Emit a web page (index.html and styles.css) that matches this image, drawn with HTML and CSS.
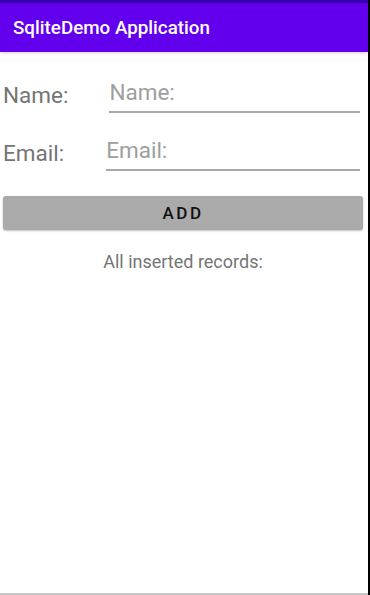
FILE: index.html
```html
<!DOCTYPE html>
<html>
<head>
<meta charset="utf-8">
<link rel="stylesheet" href="styles.css">
</head>
<body>
<div class="screen">
  <div class="status"></div>
  <header class="appbar">SqliteDemo Application</header>
  <main class="content">
    <div class="row row-name">
      <span class="label">Name:</span>
      <div class="field field-name"><span class="hint">Name:</span></div>
    </div>
    <div class="row row-email">
      <span class="label">Email:</span>
      <div class="field field-email"><span class="hint">Email:</span></div>
    </div>
    <button class="add">ADD</button>
    <p class="records">All inserted records:</p>
  </main>
</div>
</body>
</html>
```
FILE: styles.css
```css
html, body {
  margin: 0;
  padding: 0;
  background: #000;
}
.screen {
  width: 368px;
  height: 593px;
  background: #fff;
  border-bottom: 2px solid #c8c8c8;
  display: flex;
  flex-direction: column;
  font-family: Roboto, "Noto Sans", sans-serif;
}
.status {
  height: 3px;
  background: #3700b3;
}
.appbar {
  height: 49px;
  background: #6200ee;
  color: #fff;
  font-size: 18.8px;
  font-weight: 500;
  display: flex;
  align-items: center;
  padding-left: 13px;
  box-shadow: 0 1px 3px rgba(0,0,0,0.18);
}
.content {
  display: flex;
  flex-direction: column;
  padding: 0 5px 0 3px;
}
.row {
  display: flex;
  align-items: flex-end;
}
.row-name {
  margin-top: 28px;
}
.row-email {
  margin-top: 25px;
}
.label {
  font-size: 22.5px;
  color: #757575;
  line-height: 25px;
  padding-bottom: 5px;
}
.field {
  flex: 1;
  border-bottom: 2px solid #a8a8a8;
  line-height: 25px;
  padding-bottom: 4px;
  margin-right: 3px;
}
.field-name { margin-left: 41px; }
.field-email { margin-left: 42px; }
.hint {
  font-size: 22.5px;
  color: #9e9e9e;
}
.add {
  margin-top: 25px;
  height: 34px;
  border: none;
  border-radius: 3px;
  background: #aaaaaa;
  box-shadow: 0 1px 2px rgba(0,0,0,0.25);
  font-family: Roboto, sans-serif;
  font-size: 17px;
  font-weight: 500;
  letter-spacing: 2.5px;
  color: #111;
  padding: 0;
}
.records {
  margin: 21px 0 0 0;
  text-align: center;
  font-size: 18px;
  color: #757575;
}
```
